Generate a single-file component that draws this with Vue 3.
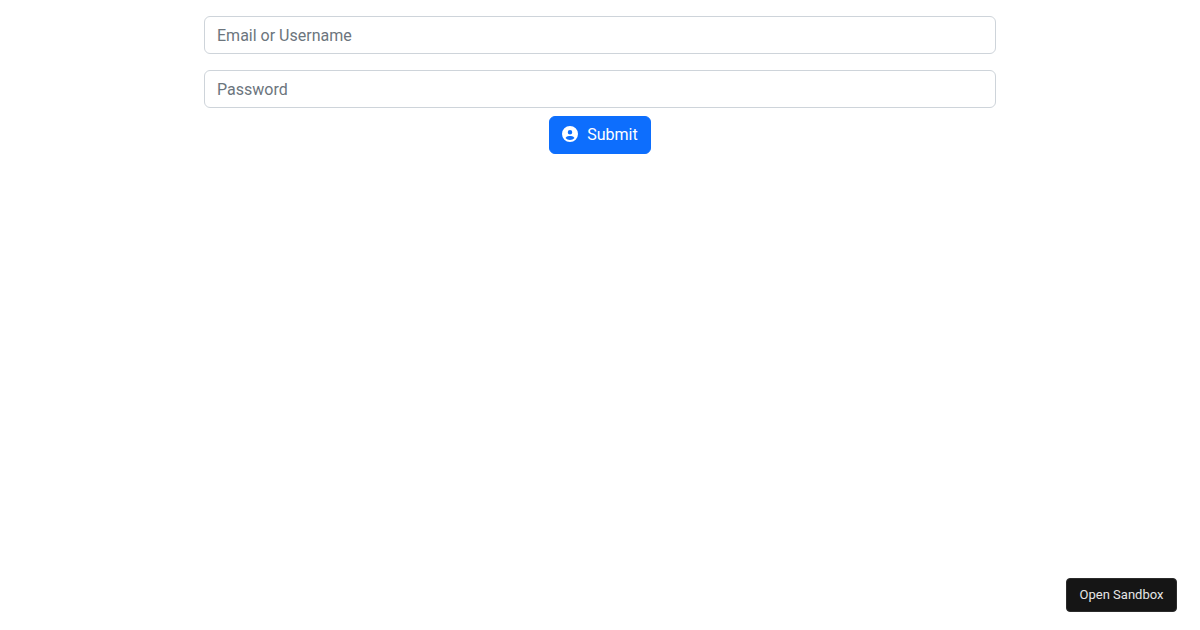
<script setup>
const fields = [
  { type: 'text', placeholder: 'Email or Username' },
  { type: 'password', placeholder: 'Password' },
]
</script>

<template>
  <main class="page">
    <form class="login" @submit.prevent>
      <input
        v-for="field in fields"
        :key="field.placeholder"
        class="field"
        :type="field.type"
        :placeholder="field.placeholder"
      />
      <button class="submit" type="submit">
        <svg class="icon" viewBox="0 0 512 512" width="16" height="16" aria-hidden="true">
          <path fill="currentColor" d="M399 384.2C376.9 345.8 335.4 320 288 320H224c-47.4 0-88.9 25.8-111 64.2c35.2 39.2 86.2 63.8 143 63.8s107.8-24.7 143-63.8zM0 256a256 256 0 1 1 512 0A256 256 0 1 1 0 256zm256 16a72 72 0 1 0 0-144 72 72 0 1 0 0 144z" />
        </svg>
        <span>Submit</span>
      </button>
    </form>
    <button class="sandbox" type="button">Open Sandbox</button>
  </main>
</template>

<style scoped>
.page {
  min-height: 630px;
  box-sizing: border-box;
  background: #fff;
  padding-top: 16px;
  font-family: Roboto, "Liberation Sans", Arial, sans-serif;
}
.login {
  width: 792px;
  margin: 0 auto;
  display: flex;
  flex-direction: column;
  align-items: center;
}
.field {
  box-sizing: border-box;
  width: 100%;
  height: 38px;
  margin: 0 0 16px;
  padding: 6px 12px;
  border: 1px solid #ced4da;
  border-radius: 6px;
  background: #fff;
  color: #212529;
  font: 400 16px/24px Roboto, "Liberation Sans", Arial, sans-serif;
  outline: none;
}
.field:last-of-type {
  margin-bottom: 8px;
}
.field::placeholder {
  color: #6c757d;
  opacity: 1;
}
.submit {
  box-sizing: border-box;
  display: flex;
  align-items: center;
  gap: 9px;
  height: 38px;
  padding: 6px 12px;
  border: 1px solid #0d6efd;
  border-radius: 6px;
  background: #0d6efd;
  color: #fff;
  font: 400 16px/24px Roboto, "Liberation Sans", Arial, sans-serif;
  cursor: pointer;
}
.icon {
  display: block;
  flex: none;
  margin-top: -2px;
}
.sandbox {
  position: fixed;
  right: 23px;
  bottom: 18px;
  box-sizing: border-box;
  width: 111px;
  height: 34px;
  padding: 0;
  border: 1px solid #2b2b2b;
  border-radius: 4px;
  background: #151515;
  color: #e6e6e6;
  font: 400 13px/16px Roboto, "Liberation Sans", sans-serif;
  cursor: pointer;
}
</style>
